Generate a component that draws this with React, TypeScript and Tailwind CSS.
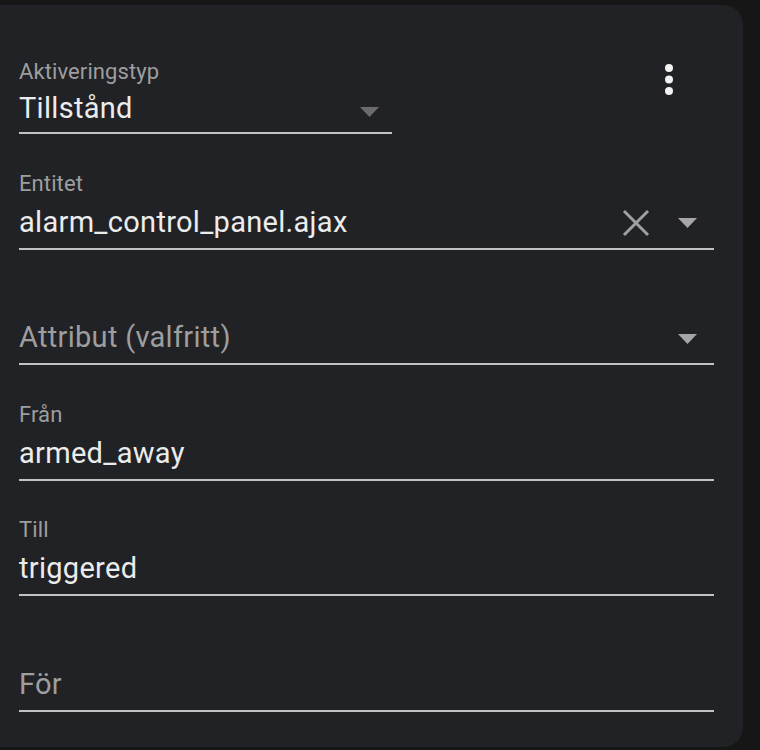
import React from "react";

const font = { fontFamily: "Roboto, 'Noto Sans', sans-serif" };

function Arrow({ color, className }: { color: string; className?: string }) {
  return (
    <svg width="19" height="10" viewBox="0 0 19 10" className={className}>
      <path d="M0 0 L19 0 L9.5 10 Z" fill={color} />
    </svg>
  );
}

function CloseIcon() {
  return (
    <svg width="28" height="28" viewBox="0 0 28 28">
      <path d="M2 2 L26 26 M26 2 L2 26" stroke="#a0a0a0" strokeWidth="3" fill="none" />
    </svg>
  );
}

function Dots() {
  return (
    <svg width="12" height="32" viewBox="0 0 12 32">
      <circle cx="6" cy="4" r="4" fill="#f2f2f2" />
      <circle cx="6" cy="15.5" r="4" fill="#f2f2f2" />
      <circle cx="6" cy="27" r="4" fill="#f2f2f2" />
    </svg>
  );
}

function Field({
  label,
  value,
  placeholder,
  h,
  right,
}: {
  label?: string;
  value?: string;
  placeholder?: string;
  h: string;
  right?: React.ReactNode;
}) {
  return (
    <div className={`flex flex-col justify-end ${h}`}>
      {label && (
        <div className="h-[22px] text-[22px] leading-[22px] text-[#9e9e9e] mb-[13px] tracking-[0.1px]">
          {label}
        </div>
      )}
      <div className="h-[29px] flex items-center mb-[11px]">
        {value ? (
          <div className="flex-1 text-[29px] leading-[29px] text-[#ececec] tracking-[0.3px]">{value}</div>
        ) : (
          <div className="flex-1 text-[29px] leading-[29px] text-[#9e9e9e] tracking-[0.3px]">{placeholder}</div>
        )}
        {right}
      </div>
      <div className="h-[2px] bg-[#c2c2c2]" />
    </div>
  );
}

export default function App() {
  return (
    <div className="min-h-[750px] w-[760px] bg-[#161616] pt-[5px] overflow-hidden" style={font}>
      <div className="w-[743px] h-[742px] bg-[#212226] rounded-tr-[20px] rounded-br-[20px] pl-[19px] pr-[29px] flex flex-col">
        <div className="flex h-[129px]">
          <div className="w-[373px] flex flex-col justify-end">
            <div className="h-[22px] text-[22px] leading-[22px] text-[#9e9e9e] mb-[11px] tracking-[0.1px]">
              Aktiveringstyp
            </div>
            <div className="h-[29px] flex items-center mb-[9px]">
              <div className="flex-1 text-[29px] leading-[29px] text-[#ececec] tracking-[0.3px]">Tillstånd</div>
              <Arrow color="#6c6c70" className="mt-[6px] mr-[13px]" />
            </div>
            <div className="h-[2px] bg-[#c2c2c2]" />
          </div>
          <div className="ml-[271px] mt-[59px] self-start">
            <Dots />
          </div>
        </div>
        <Field
          h="h-[116px]"
          label="Entitet"
          value="alarm_control_panel.ajax"
          right={
            <div className="flex items-center">
              <CloseIcon />
              <Arrow color="#a6a6a6" className="ml-[28px] mr-[17px]" />
            </div>
          }
        />
        <Field
          h="h-[115px]"
          placeholder="Attribut (valfritt)"
          right={<Arrow color="#a6a6a6" className="mt-[2px] mr-[17px]" />}
        />
        <Field h="h-[116px]" label="Från" value="armed_away" />
        <Field h="h-[115px]" label="Till" value="triggered" />
        <Field h="h-[116px]" placeholder="För" />
      </div>
    </div>
  );
}
